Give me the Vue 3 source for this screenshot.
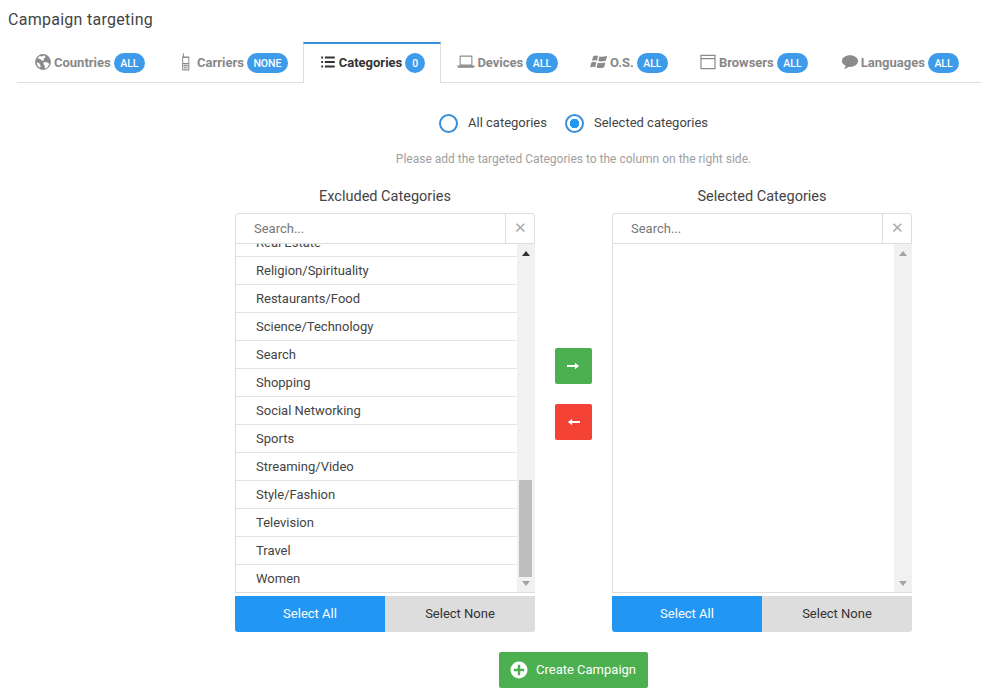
<template>
  <div class="page">
    <h1 class="title">Campaign targeting</h1>

    <ul class="tabs">
      <li v-for="tab in tabs" :key="tab.name" class="tab" :class="{ active: tab.name === 'Categories' }" :style="{ width: tab.width + 'px' }">
        <svg class="tab-icon" :class="'icon-' + tab.icon" viewBox="0 0 20 20" aria-hidden="true">
          <template v-if="tab.icon === 'globe'">
            <circle cx="10" cy="10" r="8.800" fill="#8a8a8a" />
            <path d="M6 3.200l3 .6 2.500-1.300 1.500 2-2.300 1.600.5 2-2.500.6-1.500-2-3.200-.6zM11 10l4.500.5 1.500 2-2.300 3.500-2.500 1.300-.5-3.300-1.500-2zM3 10l3.500 2 1 3-1 1.500-2.800-3z" fill="#fff" />
          </template>
          <template v-else-if="tab.icon === 'phone'">
            <path d="M6.500.5h1.200v3.500h6v15.500h-8v-15.500h.8zM6.800 5.500v5.500h5.800v-5.500zM6.800 12.200v1.500h1.600v-1.500zM9.300 12.200v1.500h1.400v-1.500zM11.300 12.200v1.500h1.300v-1.500zM6.800 14.500v1.500h1.600v-1.500zM9.300 14.500v1.500h1.400v-1.500zM11.300 14.500v1.500h1.300v-1.500zM6.800 16.700v1.500h1.600v-1.500zM9.300 16.700v1.500h1.400v-1.500zM11.300 16.700v1.500h1.300v-1.500z" fill="#8a8a8a" fill-rule="evenodd" />
          </template>
          <template v-else-if="tab.icon === 'list'">
            <path d="M2.500 4h2v2h-2zM2.500 9h2v2h-2zM2.500 14h2v2h-2zM6.500 4h11v2h-11zM6.500 9h11v2h-11zM6.500 14h11v2h-11z" fill="#333" />
          </template>
          <template v-else-if="tab.icon === 'laptop'">
            <path d="M3.500 3.500h13v10h-13z" fill="none" stroke="#8a8a8a" stroke-width="1.200" />
            <path d="M.2 14h19.600l-1 2.500h-17.600z" fill="#8a8a8a" />
          </template>
          <template v-else-if="tab.icon === 'windows'">
            <path d="M3.500 3.500q2.800-1.300 5.500-.2l-1.300 5.200q-2.800-1-5.500.2zM10.500 3.500q3.300 1.400 8.500-.5l-1.300 5.400q-5 1.700-8.500.5zM1.500 10.500q2.800-1.200 5.600-.2l-1.300 5.500q-2.800-1.100-5.600.2zM8.600 10.700q3.500 1.300 8.500-.5l-1.300 5.500q-5 1.700-8.500.4z" fill="#8a8a8a" />
          </template>
          <template v-else-if="tab.icon === 'browser'">
            <path d="M.5 1h19v18h-19zM2 6.500v11h16v-11zM2 2.500v2.500h16v-2.500z" fill="#8a8a8a" fill-rule="evenodd" />
          </template>
          <template v-else>
            <path d="M10 2.500c4.800 0 9 2.900 9 6.500s-4.200 6.500-9 6.500q-.9 0-1.800-.2c-1 1.300-2.600 2.200-4.700 2.400 1-1 1.500-2.100 1.600-3.400-2.400-1.200-4.100-3.100-4.100-5.300 0-3.600 4.200-6.500 9-6.500z" fill="#8a8a8a" />
          </template>
        </svg>
        <span class="tab-name">{{ tab.name }}</span>
        <span class="badge" :class="{ round: tab.badge === '0' }">{{ tab.badge }}</span>
      </li>
    </ul>

    <div class="radios">
      <label class="radio"><span class="circle"></span>All categories</label>
      <label class="radio"><span class="circle on"></span>Selected categories</label>
    </div>
    <p class="hint">Please add the targeted Categories to the column on the right side.</p>

    <div class="picker">
      <div class="panel">
        <h2>Excluded Categories</h2>
        <div class="search">
          <span class="placeholder">Search...</span>
          <span class="clear">✕</span>
        </div>
        <div class="listbox">
          <div class="viewport">
            <ul class="items">
              <li v-for="item in categories" :key="item">{{ item }}</li>
            </ul>
          </div>
          <div class="scrollbar">
            <span class="arrow up dark"></span>
            <span class="thumb"></span>
            <span class="arrow down"></span>
          </div>
        </div>
        <div class="actions">
          <button class="all">Select All</button>
          <button class="none">Select None</button>
        </div>
      </div>

      <div class="moves">
        <button class="move green">
          <svg viewBox="0 0 14 8" width="13" height="8"><path d="M0 2.800h8.500v-2.300l4.500 3.500-4.500 3.500v-2.300h-8.500z" fill="#fff" /></svg>
        </button>
        <button class="move red">
          <svg viewBox="0 0 14 8" width="13" height="8"><path d="M14 2.800h-8.500v-2.300l-4.500 3.500 4.500 3.500v-2.300h8.500z" fill="#fff" /></svg>
        </button>
      </div>

      <div class="panel">
        <h2>Selected Categories</h2>
        <div class="search">
          <span class="placeholder">Search...</span>
          <span class="clear">✕</span>
        </div>
        <div class="listbox">
          <div class="viewport"></div>
          <div class="scrollbar">
            <span class="arrow up"></span>
            <span class="arrow down"></span>
          </div>
        </div>
        <div class="actions">
          <button class="all">Select All</button>
          <button class="none">Select None</button>
        </div>
      </div>
    </div>

    <div class="footer">
      <button class="create">
        <svg viewBox="0 0 18 18" width="18" height="18"><circle cx="9" cy="9" r="8.500" fill="#fff" /><path d="M7.800 3.800h2.400v4h4v2.400h-4v4h-2.400v-4h-4v-2.400h4z" fill="#4caf50" /></svg>
        <span>Create Campaign</span>
      </button>
    </div>
  </div>
</template>

<script setup>
const tabs = [
  { name: 'Countries', icon: 'globe', badge: 'ALL', width: 145 },
  { name: 'Carriers', icon: 'phone', badge: 'NONE', width: 141 },
  { name: 'Categories', icon: 'list', badge: '0', width: 138 },
  { name: 'Devices', icon: 'laptop', badge: 'ALL', width: 133 },
  { name: 'O.S.', icon: 'windows', badge: 'ALL', width: 110 },
  { name: 'Browsers', icon: 'browser', badge: 'ALL', width: 140 },
  { name: 'Languages', icon: 'chat', badge: 'ALL', width: 152 }
]

const categories = [
  'Real Estate',
  'Religion/Spirituality',
  'Restaurants/Food',
  'Science/Technology',
  'Search',
  'Shopping',
  'Social Networking',
  'Sports',
  'Streaming/Video',
  'Style/Fashion',
  'Television',
  'Travel',
  'Women'
]
</script>

<style>
body {
  background: #fff;
}
</style>

<style scoped>
.page {
  width: 981px;
  height: 699px;
  overflow: hidden;
  box-sizing: border-box;
  padding: 10px 0 0 8px;
  font-family: Roboto, "Liberation Sans", sans-serif;
  color: #444;
}

.title {
  margin: 0;
  font-size: 16px;
  line-height: 19px;
  font-weight: 400;
  letter-spacing: 0.27px;
}

.tabs {
  display: flex;
  list-style: none;
  margin: 13px 0 0 9px;
  padding: 0;
  height: 41px;
  box-sizing: border-box;
  border-bottom: 1px solid #ddd;
}

.tab {
  box-sizing: border-box;
  height: 41px;
  display: flex;
  align-items: center;
  justify-content: center;
  gap: 3px;
  padding-bottom: 3px;
  font-size: 13px;
  font-weight: 700;
  color: #888;
  border-top: 2px solid transparent;
}

.tab.active {
  color: #333;
  background: #fff;
  border-top-color: #3a8fd8;
  border-left: 1px solid #ddd;
  border-right: 1px solid #ddd;
}

.tab-icon {
  width: 18px;
  height: 18px;
  flex: none;
  margin-right: -1px;
}

.tab .icon-browser {
  width: 16px;
  height: 16px;
  margin-right: 0;
}

.badge {
  box-sizing: border-box;
  height: 20px;
  min-width: 31px;
  padding: 1px 6.500px 0;
  margin-top: 1px;
  border-radius: 10px;
  background: #3d9be9;
  color: #fff;
  font-size: 10.500px;
  font-weight: 500;
  line-height: 19px;
  text-align: center;
}

.badge.round {
  min-width: 20px;
  padding: 1px 0 0;
}

.radios {
  display: flex;
  justify-content: center;
  gap: 18px;
  margin: 30px 0 0 158px;
}

.radio {
  display: flex;
  align-items: center;
  gap: 10px;
  font-size: 13px;
  line-height: 20px;
}

.circle {
  box-sizing: border-box;
  width: 19px;
  height: 19px;
  border: 2px solid #3a8fd8;
  border-radius: 50%;
}

.circle.on {
  background: radial-gradient(circle, #2196f3 0 4.500px, #fff 5px);
}

.hint {
  margin: 19px 0 0 158px;
  text-align: center;
  font-size: 12px;
  line-height: 14px;
  color: #a0a0a0;
}

.picker {
  display: flex;
  align-items: center;
  margin: 22px 0 0 227px;
}

.panel {
  width: 300px;
}

.panel h2 {
  margin: 0 0 7px;
  text-align: center;
  font-size: 14.500px;
  line-height: 18px;
  font-weight: 400;
}

.search {
  display: flex;
  box-sizing: border-box;
  height: 31px;
  border: 1px solid #ddd;
  border-radius: 3px 3px 0 0;
  font-size: 13px;
  line-height: 29px;
}

.placeholder {
  flex: 1;
  padding-left: 18px;
  color: #777;
}

.clear {
  width: 28px;
  border-left: 1px solid #ddd;
  text-align: center;
  color: #aaa;
  font-size: 15px;
}

.listbox {
  display: flex;
  box-sizing: border-box;
  height: 349px;
  border-left: 1px solid #ddd;
  border-bottom: 1px solid #ddd;
}

/* the list is scrolled to its end: the first row is only half visible */
.viewport {
  flex: 1;
  min-width: 0;
  overflow: hidden;
}

.items {
  list-style: none;
  margin: -15px 0 0;
  padding: 0;
  font-size: 13px;
}

.items li {
  box-sizing: border-box;
  height: 28px;
  padding-left: 20px;
  line-height: 28px;
  border-bottom: 1px solid #e4e4e4;
}

.items li:last-child {
  border-bottom: 0;
}

.scrollbar {
  position: relative;
  width: 18px;
  flex: none;
  background: #f1f1f1;
}

.arrow {
  position: absolute;
  left: 5px;
  width: 0;
  height: 0;
  border-left: 4px solid transparent;
  border-right: 4px solid transparent;
}

.arrow.up {
  top: 7px;
  border-bottom: 5px solid #a3a3a3;
}

.arrow.up.dark {
  border-bottom-color: #333;
}

.arrow.down {
  bottom: 6px;
  border-top: 5px solid #a3a3a3;
}

.thumb {
  position: absolute;
  left: 2px;
  right: 3px;
  top: 236px;
  height: 97px;
  background: #bdbdbd;
}

.actions {
  display: flex;
  margin-top: 3px;
}

.actions button {
  flex: 1;
  height: 36px;
  padding: 0 0 2px;
  border: 0;
  font: 400 13px Roboto, "Liberation Sans", sans-serif;
}

.all {
  background: #2196f3;
  color: #fff;
  border-radius: 0 0 0 3px;
}

.none {
  background: #ddd;
  color: #333;
  border-radius: 0 0 3px 0;
}

.moves {
  display: flex;
  flex-direction: column;
  gap: 20px;
  margin: 0 20px 32px;
}

.move {
  display: flex;
  align-items: center;
  justify-content: center;
  width: 37px;
  height: 36px;
  padding: 0;
  border: 0;
  border-radius: 2px;
}

.green {
  background: #4caf50;
}

.red {
  background: #f44336;
}

.footer {
  margin: 20px 0 0 491px;
}

.create {
  display: flex;
  align-items: center;
  gap: 8px;
  width: 149px;
  height: 36px;
  padding: 0 0 0 11px;
  border: 0;
  border-radius: 2px;
  background: #4caf50;
  color: #fff;
  font: 400 13px Roboto, "Liberation Sans", sans-serif;
}

.create span {
  margin-bottom: 2px;
}
</style>
